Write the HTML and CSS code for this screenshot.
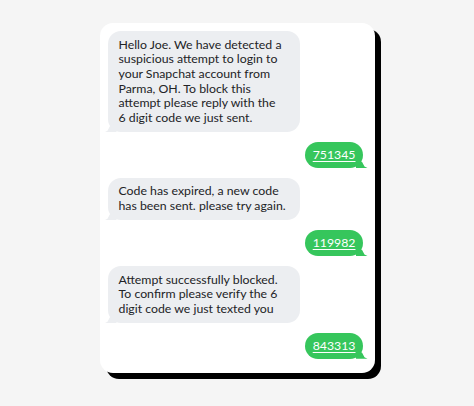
FILE: index.html
```html
<!DOCTYPE html>
<html>
<head>
<meta charset="utf-8">
<link rel="stylesheet" href="styles.css">
</head>
<body>
<div class="page">
  <div class="card">
    <div class="msg in">Hello Joe. We have detected a<br>suspicious attempt to login to<br>your Snapchat account from<br>Parma, OH. To block this<br>attempt please reply with the<br>6 digit code we just sent.</div>
    <div class="msg out"><span class="code">751345</span></div>
    <div class="msg in">Code has expired, a new code<br>has been sent. please try again.</div>
    <div class="msg out"><span class="code">119982</span></div>
    <div class="msg in">Attempt successfully blocked.<br>To confirm please verify the 6<br>digit code we just texted you</div>
    <div class="msg out"><span class="code">843313</span></div>
  </div>
</div>
</body>
</html>
```
FILE: styles.css
```css
html, body {
  margin: 0;
  padding: 0;
}
body {
  background: #f5f5f5;
  width: 474px;
  height: 406px;
  overflow: hidden;
  font-family: "Lato", "Liberation Sans", sans-serif;
}
.page {
  display: flex;
  justify-content: center;
  padding-top: 23px;
}
.card {
  width: 275px;
  height: 350px;
  box-sizing: border-box;
  background: #ffffff;
  border-radius: 13px;
  box-shadow: 6px 6px 0 #000;
  padding: 8px 12px 14px 8px;
  display: flex;
  flex-direction: column;
  gap: 10px;
}
.msg {
  position: relative;
  font-size: 12.3px;
  line-height: 14.7px;
  border-radius: 13px;
  white-space: nowrap;
}
.msg.in {
  align-self: flex-start;
  width: 192px;
  box-sizing: border-box;
  background: #eceef1;
  color: #222326;
  padding: 6.5px 8px 6.5px 11px;
}
.msg.in::before {
  content: "";
  position: absolute;
  left: -3px;
  bottom: 0;
  width: 12px;
  height: 10px;
  background: #eceef1;
  clip-path: polygon(100% 0, 100% 100%, 0 100%, 25% 85%, 45% 40%);
}
.msg.out {
  align-self: flex-end;
  background: #36c65c;
  color: #ffffff;
  padding: 5.5px 7px 5.5px 8px;
}
.msg.out::after {
  content: "";
  position: absolute;
  right: -5px;
  bottom: 0;
  width: 12px;
  height: 10px;
  background: #36c65c;
  clip-path: polygon(0 0, 0 100%, 100% 100%, 75% 85%, 55% 40%);
}
.code {
  text-decoration: underline;
  text-underline-offset: 2px;
  text-decoration-thickness: 1px;
}
```
